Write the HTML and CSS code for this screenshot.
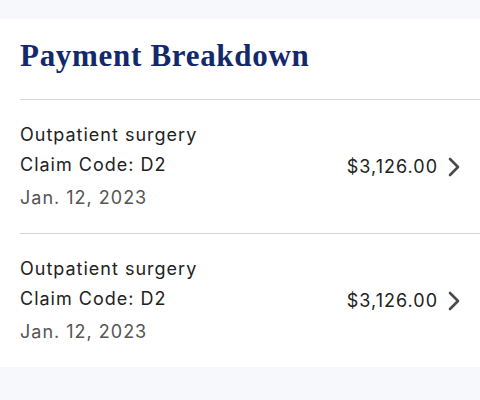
FILE: index.html
```html
<!DOCTYPE html>
<html>
<head>
<meta charset="utf-8">
<link rel="stylesheet" href="styles.css">
</head>
<body>
<div class="band"></div>
<section class="card">
  <h1 class="title">Payment Breakdown</h1>
  <ul class="list">
    <li class="row">
      <div class="info">
        <div class="name">Outpatient surgery</div>
        <div class="code">Claim Code: D2</div>
        <div class="date">Jan. 12, 2023</div>
      </div>
      <div class="amount">
        <span class="value">$3,126.00</span>
        <svg class="chev" width="12" height="20" viewBox="0 0 12 20"><path d="M2 2 L10 10 L2 18" fill="none" stroke="#4a4a4a" stroke-width="2.6" stroke-linecap="round" stroke-linejoin="round"/></svg>
      </div>
    </li>
    <li class="row">
      <div class="info">
        <div class="name">Outpatient surgery</div>
        <div class="code">Claim Code: D2</div>
        <div class="date">Jan. 12, 2023</div>
      </div>
      <div class="amount">
        <span class="value">$3,126.00</span>
        <svg class="chev" width="12" height="20" viewBox="0 0 12 20"><path d="M2 2 L10 10 L2 18" fill="none" stroke="#4a4a4a" stroke-width="2.6" stroke-linecap="round" stroke-linejoin="round"/></svg>
      </div>
    </li>
  </ul>
</section>
<div class="band bottom"></div>
</body>
</html>
```
FILE: styles.css
```css
html, body {
  margin: 0;
  padding: 0;
  background: #f7f8fc;
}
body {
  width: 480px;
  height: 400px;
  overflow: hidden;
  font-family: "Inter", "Liberation Sans", sans-serif;
}
.band {
  height: 19px;
  background: #f7f8fc;
}
.card {
  background: #ffffff;
  padding-left: 20px;
  height: 348px;
  overflow: hidden;
}
.title {
  margin: 0;
  padding-top: 20px;
  height: 80px;
  box-sizing: border-box;
  font-family: "Liberation Serif", serif;
  font-weight: bold;
  font-size: 31px;
  line-height: 34px;
  color: #13296b;
  letter-spacing: 0.7px;
}
.list {
  list-style: none;
  margin: 0;
  padding: 0;
}
.row {
  display: flex;
  align-items: center;
  justify-content: space-between;
  border-top: 1.5px solid #d6d6d6;
  padding: 20px 20px 20px 0;
}
.info {
  color: #222222;
  font-size: 18px;
  line-height: 30px;
  letter-spacing: 1px;
}
.date {
  margin-top: 3px;
  color: #555555;
}
.amount {
  display: flex;
  align-items: center;
  gap: 10px;
  color: #222222;
  font-size: 18px;
  letter-spacing: 1px;
}
.chev {
  display: block;
}
```
